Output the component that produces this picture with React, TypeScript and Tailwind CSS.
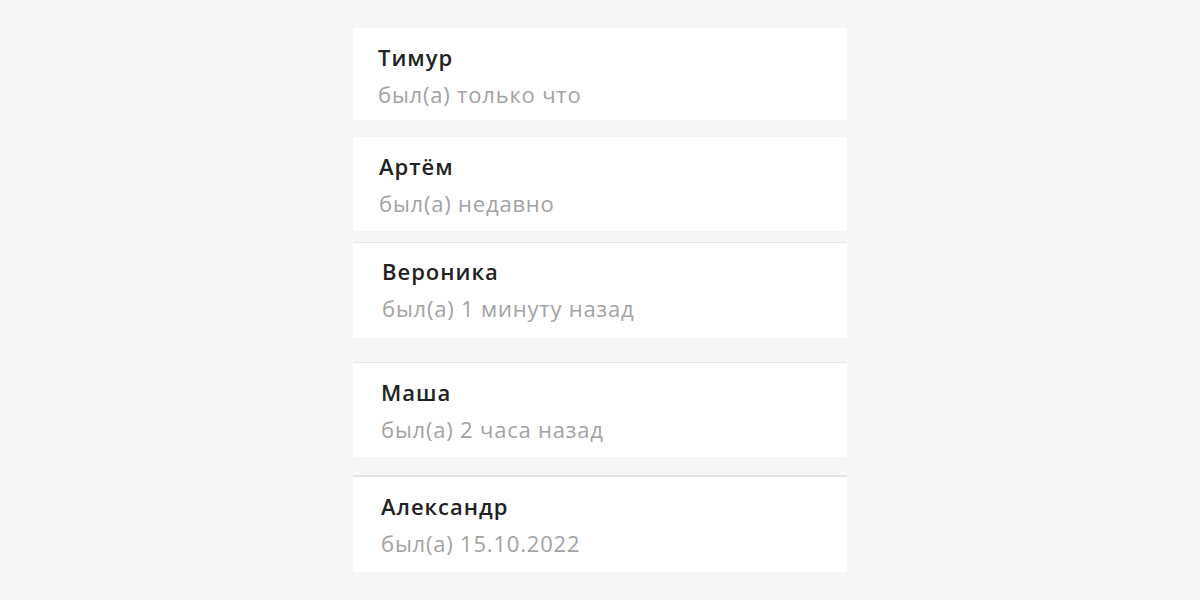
import React from 'react';

interface Contact {
  name: string;
  seen: string;
  box: string;
}

// Each row carries its own spacing/border classes
const contacts: Contact[] = [
  { name: 'Тимур', seen: 'был(а) только что', box: 'h-[92px] pt-[14px] pl-[25px]' },
  { name: 'Артём', seen: 'был(а) недавно', box: 'mt-[17px] h-[94px] pt-[14px] pl-[26px]' },
  { name: 'Вероника', seen: 'был(а) 1 минуту назад', box: 'mt-[11px] h-[96px] border-t border-[#e6e6e6] pt-[13px] pl-[29px]' },
  { name: 'Маша', seen: 'был(а) 2 часа назад', box: 'mt-[24px] h-[95px] border-t border-[#e6e6e6] pt-[14px] pl-[28px]' },
  { name: 'Александр', seen: 'был(а) 15.10.2022', box: 'mt-[18px] h-[97px] border-t-2 border-[#e4e4e4] pt-[14px] pl-[28px]' },
];

const ContactRow: React.FC<{ contact: Contact }> = ({ contact }) => (
  <div className={`bg-white ${contact.box}`}>
    <div className="text-[22px] leading-[30px] tracking-[1px] font-semibold text-[#222222]">{contact.name}</div>
    <div className="mt-[7px] text-[22px] leading-[30px] tracking-[0.8px] text-[#a3a3a3]">{contact.seen}</div>
  </div>
);

export default function App() {
  return (
    <div className="min-h-[600px] w-full bg-[#f6f6f6] pt-[28px] font-['Open_Sans',sans-serif]">
      <div className="ml-[353px] flex w-[494px] flex-col">
        {contacts.map((c) => (
          <ContactRow key={c.name} contact={c} />
        ))}
      </div>
    </div>
  );
}
